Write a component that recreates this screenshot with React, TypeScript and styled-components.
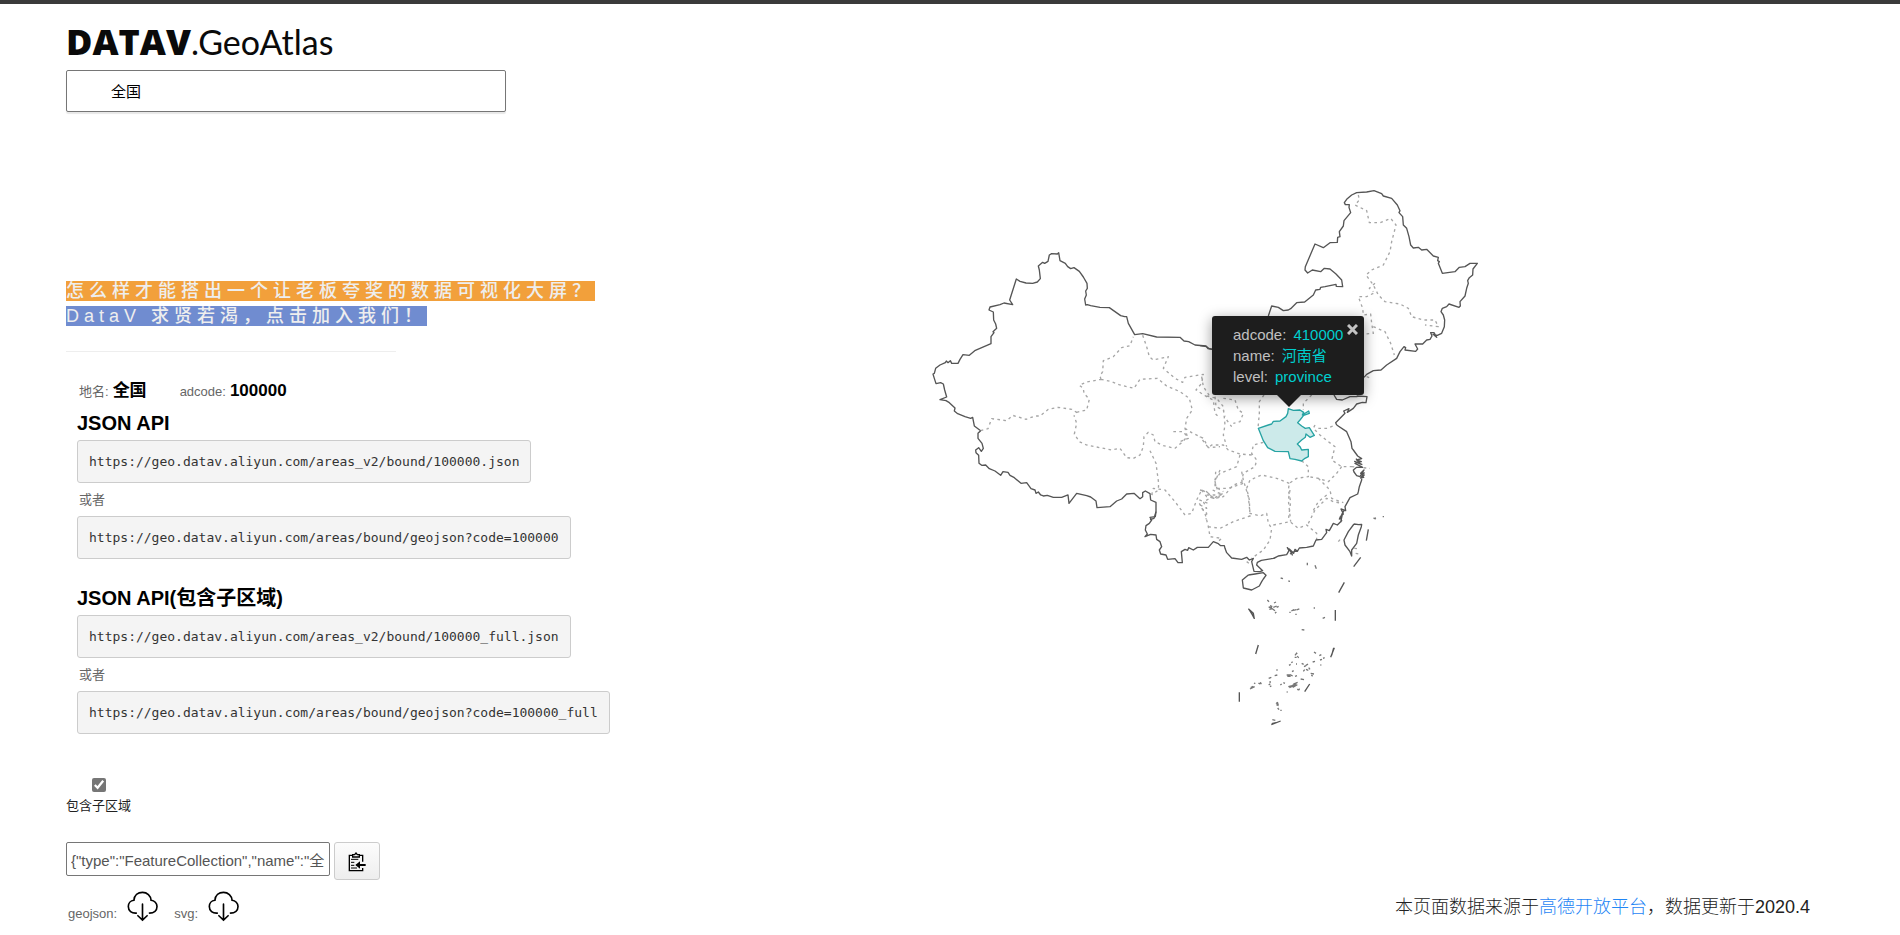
import React, { useState } from "react";
import styled, { createGlobalStyle } from "styled-components";

const GlobalStyle = createGlobalStyle`
  *, *::before, *::after { box-sizing: border-box; }
  body {
    margin: 0;
    background: #fff;
    color: #333;
    font-family: "Liberation Sans", Arial, "Noto Sans CJK SC", sans-serif;
  }
`;

const Page = styled.div`
  display: flex;
  min-height: 100vh;
  padding-left: 66px;
  border-top: 4px solid #3a3a3a;
`;

const Sidebar = styled.aside`
  flex: none;
  width: 440px;
  padding-top: 18px;
  white-space: nowrap;
`;

const Logo = styled.h1`
  display: flex;
  align-items: baseline;
  margin: 0;
  height: 48px;
  color: #0a0a0a;
  font: 400 34px/40px Lato, sans-serif;
`;

const LogoStrong = styled.span`
  font: 800 36px/40px "Open Sans", sans-serif;
`;

const SearchInput = styled.input`
  display: block;
  width: 100%;
  height: 42px;
  padding: 0 44px 2px;
  border: 1px solid #767676;
  border-radius: 2px;
  box-shadow: 0 2px 1px #e8e8e8;
  color: #000;
  font: 15px "Liberation Sans", "Noto Sans CJK SC", sans-serif;
`;

const Recruit = styled.a`
  display: block;
  margin-top: 169px;
  color: #eee;
  font-size: 18px;
  font-weight: 500;
  line-height: 25px;
  letter-spacing: 5px;
  text-decoration: none;
`;

const RecruitLine = styled.span<{ $color: string }>`
  display: block;
  width: fit-content;
  height: 20px;
  margin-bottom: 5px;
  background: ${(p) => p.$color};
  line-height: 20px;
`;

const Divider = styled.hr`
  width: 330px;
  height: 1px;
  margin: 25px 0 27px;
  border: 0;
  background: #eee;
`;

const Facts = styled.dl`
  display: flex;
  gap: 33px;
  margin: 0;
  padding-left: 13px;
  line-height: 24px;
`;

const Fact = styled.div`
  display: flex;
  align-items: baseline;
  gap: 4px;
`;

const Term = styled.dt`
  color: #666;
  font-size: 13px;
`;

const Value = styled.dd`
  margin: 0;
  color: #000;
  font-size: 17px;
  font-weight: 700;
`;

const ApiSection = styled.section`
  margin-bottom: 20px;
  padding-left: 11px;
`;

const ApiTitle = styled.h2`
  margin: 0;
  padding: 5px 0 3px;
  color: #000;
  font-size: 20px;
  line-height: 28px;
`;

const Endpoint = styled.code`
  display: block;
  width: fit-content;
  padding: 0 11px;
  border: 1px solid #ccc;
  border-radius: 3px;
  background: #f4f4f4;
  color: #333;
  font: 13px/41px "DejaVu Sans Mono", monospace;
`;

const Or = styled.p`
  margin: 0;
  padding-left: 2px;
  color: #666;
  font-size: 13px;
  line-height: 33px;
`;

const ChildToggle = styled.label`
  display: flex;
  flex-direction: column;
  align-items: center;
  gap: 4px;
  width: fit-content;
  margin-top: 44px;
  color: #222;
  font-size: 13px;
  line-height: 20px;
`;

const Checkbox = styled.input`
  width: 14px;
  height: 14px;
  margin: 0;
  accent-color: #767676;
`;

const CopyRow = styled.div`
  display: flex;
  align-items: flex-start;
  gap: 4px;
  margin-top: 26px;
`;

const DataInput = styled.input`
  width: 264px;
  height: 34px;
  padding: 0 4px;
  border: 1px solid #767676;
  border-radius: 2px;
  color: #555;
  font: 15px "Liberation Sans", "Noto Sans CJK SC", sans-serif;
`;

const CopyButton = styled.button`
  display: flex;
  align-items: center;
  justify-content: center;
  width: 46px;
  height: 38px;
  padding: 2px 0 0;
  border: 1px solid #ccc;
  border-radius: 3px;
  background: linear-gradient(#fcfcfc, #eee);
`;

const Downloads = styled.div`
  display: flex;
  gap: 16px;
  margin-top: 11px;
  padding-left: 2px;
`;

const DownloadLink = styled.a`
  display: flex;
  align-items: center;
  gap: 10px;
  color: #666;
  font-size: 13px;
  line-height: 15px;
  text-decoration: none;

  span { padding-top: 14px; }
`;

const MapPanel = styled.main`
  flex: 1;
  display: flex;
  flex-direction: column;
  align-items: center;
  justify-content: space-between;
  padding: 176px 0 16px;
`;

const MapStage = styled.div`
  position: relative;
  width: 580px;
`;

const MapSvg = styled.svg`
  display: block;
  width: 100%;
  fill: none;
  stroke-linejoin: round;
`;

const Popup = styled.div`
  position: absolute;
  left: 299px;
  top: 136px;
  width: 152px;
  padding: 8px 0 8px 21px;
  border-radius: 3px;
  background: #1d1d1d;
  box-shadow: 0 3px 14px rgba(0, 0, 0, 0.4);
  color: #c0c0c0;
  font-size: 15px;
  line-height: 21px;
  white-space: nowrap;

  &::after {
    content: "";
    position: absolute;
    left: 65px;
    top: 100%;
    border: 12px solid transparent;
    border-top-color: #1d1d1d;
    border-bottom: 0;
  }
`;

const PopupRow = styled.div`
  display: flex;
  gap: 7px;
`;

const PopupValue = styled.span`
  color: #00cfcf;
`;

const CloseButton = styled.button`
  position: absolute;
  top: 7px;
  right: 5px;
  display: flex;
  padding: 1px;
  border: 0;
  background: none;
  color: #c3c3c3;
`;

const Source = styled.footer`
  align-self: flex-end;
  padding-right: 90px;
  color: #222;
  font-size: 18px;
  font-weight: 300;
  line-height: 24px;

  a { color: #1f86f5; text-decoration: none; }
`;

const CloudDownload = () => (
  <svg width="31" height="31" viewBox="0 0 94 94" fill="none" stroke="#000" strokeWidth="5" strokeLinecap="round" aria-hidden="true">
    <path d="M28 67C14 68 4 60 4 47c0-10 7-18 17-19C22 13 33 4 47 4s25 10 26 24c10 1 18 9 18 19 0 12-9 20-23 20M47 40v48M33 75l14 13 14-13" />
  </svg>
);

const PasteIcon = () => (
  <svg width="18" height="20" viewBox="0 0 54 60" fill="none" stroke="#000" strokeWidth="4" aria-hidden="true">
    <path d="M14 10H4v46h40v-8M44 29V10H34" />
    <path d="M14 15V8h6l4-5 4 5h6v7z" strokeWidth="4" />
    <path d="M9 22h22M9 31h10M9 40h10M9 48h18" strokeWidth="3" />
    <path d="M26 39h27" strokeWidth="6" />
    <path d="M36 28L22 39l14 11z" fill="#000" stroke="none" />
  </svg>
);

// Geometry is stored in tiles, three units to a screen pixel.
type Tile = { x: number; y: number; borders: string; provinces: string };

const tiles: Tile[] = [
  {
    x: 920,
    y: 180,
    borders:
      "M182 752L163 738 158 712 152 715 135 710 113 701 103 693 105 684 88 668 78 662 60 659 80 651 74 630 70 612 62 608 48 611 42 592 39 582 43 580 47 565 60 555 76 548 79 543 84 548 91 542 95 550 114 550 120 538 129 524 148 526 166 511 213 491 213 470 222 458 219 455 230 445 227 432 221 420 220 396 207 390 210 381 240 374 252 369 278 374 269 360 289 297 300 304 318 309 338 310 352 306 361 296 358 270 355 258 368 247 374 250 384 244 388 225 395 221 412 222 416 218 420 242 436 250 443 260 452 266 462 263 478 274 490 291 501 310 502 325 497 333 499 345 494 357 497 375 502 374 512 377 540 382 568 383 602 407 614 410 620 410 625 430 644 464 668 461 710 471 780 472 792 483 806 485 825 495 858 498 864 506 876 508" +
      "M182 752L174 760 174 775 186 790 190 805 184 814 176 803 167 810 168 818 176 826 177 850 185 856 197 855 208 866 225 873 242 886 249 875 264 877 270 886 283 893 303 910 320 908 333 926 345 930 348 940 355 936 362 945 370 948 382 946 400 952 425 952 444 945 447 970 470 940 500 947 512 951 528 963 531 983 570 980 590 963 605 957 620 942 642 940 660 956 668 950 668 938 676 933 690 941 692 960 708 967 708 995 702 1015 690 1019",
    provinces:
      "M182 752L204 746 215 716 260 722 278 706 318 718 345 708 360 708 385 688 415 682 455 688 470 697 462 706M470 697L500 690 508 658 492 640 490 625 478 616 500 606 543 598M543 598L540 588 548 575 550 542 580 530 605 503 630 497 640 470" +
      "M543 598L575 605 600 615 642 625 660 598 712 595 740 618 780 635 808 655 817 690 800 715 795 745 802 770 785 788 765 805 730 797 705 785 700 765 685 757 672 770 670 800 660 825 640 835 620 833 600 805 575 810 540 803 500 795 478 785 463 762 470 730 462 706" +
      "M668 466L680 500 688 530 700 540 745 530 730 565 765 595 788 607 795 592 850 583 845 610 828 630 860 650 880 660 885 700 900 715M795 745L815 758 850 775 865 803 900 800M760 755L790 755 805 775 780 785" +
      "M690 812L708 850 716 910 715 930 695 945M695 945L700 925 735 930 765 965 795 1005 815 1000 830 960 845 930 865 940 880 955 900 950M900 870L885 905 895 940M840 975L860 985 850 965 880 950M845 985L860 1000 858 1018",
  },
  {
    x: 1200,
    y: 180,
    borders:
      "M410 735L407 728 435 700 431 693 447 686 442 697 460 685 470 672 487 667 498 668 501 650 470 648M472 650L450 650 427 660 410 658 402 645" +
      "M492 592L500 583 520 572 543 570 560 555 590 535 600 515 612 500 617 503 615 510 647 514 653 507 645 492 668 492 680 480 690 478 696 468 692 458 702 458 710 472 699 463 712 466 725 460 733 440 734 420 730 405 723 395 727 385 740 380 747 372 777 382 781 378 780 365 795 348 800 325 805 310 803 302 808 293 818 285 819 267 832 250 810 250 795 260 778 262 765 275 727 280 715 250 718 245 713 242 715 232 700 228 680 208 665 210 655 202 640 204 632 195 627 170 620 145 610 135 608 110 597 98 600 92 592 75 575 55 550 48 545 41 522 32 500 36 470 38 455 45 440 58 433 68 436 74 448 74 447 82 452 98 432 122 430 138 418 155 420 170 413 172 412 187 390 188 370 203 345 192 316 260 315 270 323 279 337 270 362 275 373 265 390 267 408 282 425 300 428 320 409 319 408 313 375 320 362 322 360 328 347 330 340 345 314 366 290 368 272 386 265 390 250 392 235 382 215 378 205 408M0 497L20 500 28 506 40 508",
    provinces:
      "M475 45L478 60 465 75 500 92 508 128 540 128 572 115 588 135 575 185 570 215 550 255 515 270 498 285 520 315 535 345 555 365 600 372 625 385 635 410 670 420 705 420 715 440 675 435M525 310L508 325 520 335M520 340L500 350 475 350 488 385 490 405 512 402 515 430 520 460 492 462M520 440L555 455 572 490 583 525M500 590L515 595" +
      "M192 645L178 665 178 700 174 745M335 645L310 670 310 690M345 735L340 745 360 765 385 785 405 800 395 840 425 860 455 860M355 745L380 745 400 738M455 860L510 865M425 860L410 880 385 905 355 895 325 890" +
      "M305 842L325 860 325 890 290 895 268 910 265 930 272 965 265 1020M268 910L230 895 185 885 150 900 140 925 148 960 150 1010M190 787L160 795 155 820 170 840 165 860 130 880 125 905M155 825L120 822 85 810 70 795 35 795 25 803 0 770" +
      "M120 825L110 860 60 880 45 900 48 925 85 925 130 910M20 648L50 655 70 680 75 735 70 765 80 800M45 650L48 680 70 690 75 710M70 655L105 660 115 690 130 700 120 725 100 730M80 720L95 740M355 895L390 930 395 955 430 968M380 945L355 965 335 1000M5 590L10 620 30 650M0 930L20 935 40 955 70 940M38 930L70 945",
  },
  {
    x: 1060,
    y: 380,
    borders:
      "M288 395L286 410 270 412 275 420 268 430 258 437 256 450 262 462 255 470 272 463 288 465 290 478 300 485 305 500 298 510 302 522 318 525 323 538 345 536 354 548 367 548 364 515 375 508 383 511 386 503 400 510 412 502 445 502 460 485 475 491 482 497 493 497 495 505 500 518 515 534 545 538 560 532 568 540 580 535 575 545 582 574 600 575 608 572 590 555 592 547 604 541 640 535 655 528 680 524 687 512 682 503 692 513 697 525 688 507 701 520 705 508 712 514 718 504 740 502 760 498 768 480 785 478 800 458 798 448 808 452 820 430 832 435 845 422 840 412 850 402 843 387 857 392 855 380 870 353 893 342 895 335 898 320 905 300 905 290 913 285 902 280 912 270 900 290 890 287 882 276 880 270 890 262 908 262 885 250 904 245 890 240 905 236 893 228 880 210 876 205 873 185 860 155 830 135" +
      "M842 427L846 408 838 417 852 392 845 400M900 294L911 292 905 283 914 278M888 236L900 252 884 244 907 254M690 522L704 514 713 514M642 535L655 528",
    provinces:
      "M545 275L550 300 565 350 570 400 600 408 620 400 625 430 635 445 630 480 610 510 575 535M445 440L480 445 520 425 570 408M418 370L435 400 445 440 450 470 485 475 470 488M425 330L440 350 465 355 490 350 520 315 550 305M467 275L465 320 490 335M640 435L690 425 715 445 740 435 770 460 770 480M745 430L765 390 800 355 820 365 847 370M690 330L685 360 692 425M418 360L445 370M440 345L490 345",
  },
  {
    x: 1200,
    y: 500,
    borders:
      "M462 72L476 74 485 73 484 80 475 105 470 130 455 150 455 168 450 155 435 135 432 120 445 95 462 72M145 225L165 222 190 218 198 226 190 237 185 245 178 258 155 270 130 264 127 240 145 225" +
      "M505 88L499 122M482 172L461 200M433 247L416 278M406 330V362M403 443L392 472M401 444L395 466M329 552L314 575M118 577V605M214 674L242 663M215 671L228 668M175 435L167 462M145 326L160 340 163 357M147 328L161 351M150 331L162 354",
    provinces: "M140 185L147 190M415 125L423 115M463 145L473 146M467 160L478 162",
  },
];

const islets =
  "M520 54l8 3M522 56l6-2M548 50h4M322 188v8M345 196l4 10M242 234l7 2M265 243l5 1M202 300l5 5M222 309l6-3M206 321l10 3M208 328l10-2M220 322l10-4M217 326l8 6M230 322l6-3M210 317l7 3M225 340l4-4M274 333l8-4M280 331l9-2M290 330l8-3M286 343h4M268 337h4M341 324h4M368 355l7-3M305 389l8 1M284 472h6M288 458l4 3M292 468l4 6M285 466l4-5M342 456l6 4M358 467l6-3M360 480l6-2M369 475l5-2M361 495h3M338 486l7-2M305 490l6 3M312 500l6-3M318 496l6-4M318 508l7 3M310 514l4-5M326 503l4 5M332 520l10 2M334 525l4 4M267 496l5-3M274 488l4-3M288 492h3M276 515l5-3M229 510h4M224 527l8-2M206 535l8-3M208 546h5M206 555l5-4M210 560l4-3M260 525h10M262 529h10M270 524l8 4M285 529l6-2M241 555l4-3M250 548l5 2M302 537l10 2M175 550l10 1M162 549l4 2M150 567l14-7M152 563l8-4M178 553l5-6M265 560l20-5M268 563l20-9M274 558l16-9M278 562l14-8M280 552l13-5M292 567l4 4M296 570l3-4M260 576h3M228 608l5 4M229 614l7 3M233 624l4 5M241 631h4M232 606l3 10M217 659l9 2";

const henan =
  "M265 686L280 691 300 690 311 697 307 705 326 693 328 700 311 706 300 720 293 728 305 738 316 745 328 743 343 766 330 772 318 762 316 772 305 780 292 792 300 800 305 810 325 808 325 830 315 835 305 843 285 838 270 836 265 815 225 814 203 803 190 782 175 745 205 735 215 732 220 724 240 723 258 710 263 700Z";

const endpoints = [
  {
    title: "JSON API",
    urls: [
      "https://geo.datav.aliyun.com/areas_v2/bound/100000.json",
      "https://geo.datav.aliyun.com/areas/bound/geojson?code=100000",
    ],
  },
  {
    title: "JSON API(包含子区域)",
    urls: [
      "https://geo.datav.aliyun.com/areas_v2/bound/100000_full.json",
      "https://geo.datav.aliyun.com/areas/bound/geojson?code=100000_full",
    ],
  },
];

const popupRows = [
  ["adcode:", "410000"],
  ["name:", "河南省"],
  ["level:", "province"],
];

const ChinaMap = () => (
  <MapSvg viewBox="913 180 580 560" role="img" aria-label="中国地图">
    {tiles.map((t) => (
      <g key={`${t.x}-${t.y}`} transform={`translate(${t.x} ${t.y}) scale(0.33333)`}>
        <path d={t.provinces} stroke="#a6a6a6" strokeWidth="4" strokeDasharray="8 10" />
        <path d={t.borders} stroke="#555" strokeWidth="4" />
      </g>
    ))}
    <g transform="translate(1200 500) scale(0.33333)">
      <path d={islets} stroke="#777" strokeWidth="4" />
    </g>
    <g transform="translate(1200 180) scale(0.33333)">
      <path d={henan} fill="#cceaea" stroke="#26a3a3" strokeWidth="4" />
    </g>
  </MapSvg>
);

export default function App() {
  const [area, setArea] = useState("全国");
  const [withChildren, setWithChildren] = useState(true);
  const [open, setOpen] = useState(true);

  return (
    <>
      <GlobalStyle />
      <Page>
        <Sidebar>
          <Logo>
            <LogoStrong>DATAV</LogoStrong>.GeoAtlas
          </Logo>
          <SearchInput aria-label="地名" value={area} onChange={(e) => setArea(e.target.value)} />
          <Recruit href="#join">
            <RecruitLine $color="#f2a03b">怎么样才能搭出一个让老板夸奖的数据可视化大屏？</RecruitLine>
            <RecruitLine $color="#708cd0">DataV 求贤若渴，点击加入我们！</RecruitLine>
          </Recruit>
          <Divider />
          <Facts>
            <Fact>
              <Term>地名:</Term>
              <Value>全国</Value>
            </Fact>
            <Fact>
              <Term>adcode:</Term>
              <Value>100000</Value>
            </Fact>
          </Facts>
          {endpoints.map((e) => (
            <ApiSection key={e.title}>
              <ApiTitle>{e.title}</ApiTitle>
              <Endpoint>{e.urls[0]}</Endpoint>
              <Or>或者</Or>
              <Endpoint>{e.urls[1]}</Endpoint>
            </ApiSection>
          ))}
          <ChildToggle>
            <Checkbox type="checkbox" checked={withChildren} onChange={(e) => setWithChildren(e.target.checked)} />
            包含子区域
          </ChildToggle>
          <CopyRow>
            <DataInput aria-label="geojson" readOnly value={'{"type":"FeatureCollection","name":"全国","features":[]}'} />
            <CopyButton type="button" aria-label="复制">
              <PasteIcon />
            </CopyButton>
          </CopyRow>
          <Downloads>
            <DownloadLink href="#geojson">
              <span>geojson:</span>
              <CloudDownload />
            </DownloadLink>
            <DownloadLink href="#svg">
              <span>svg:</span>
              <CloudDownload />
            </DownloadLink>
          </Downloads>
        </Sidebar>
        <MapPanel>
          <MapStage>
            <ChinaMap />
            {open && (
              <Popup>
                {popupRows.map(([label, value]) => (
                  <PopupRow key={label}>
                    <span>{label}</span>
                    <PopupValue>{value}</PopupValue>
                  </PopupRow>
                ))}
                <CloseButton type="button" aria-label="关闭" onClick={() => setOpen(false)}>
                  <svg width="11" height="11" viewBox="0 0 11 11" stroke="currentColor" strokeWidth="3">
                    <path d="M1 1l9 9M10 1l-9 9" />
                  </svg>
                </CloseButton>
              </Popup>
            )}
          </MapStage>
          <Source>
            本页面数据来源于<a href="#amap">高德开放平台</a>，数据更新于2020.4
          </Source>
        </MapPanel>
      </Page>
    </>
  );
}
